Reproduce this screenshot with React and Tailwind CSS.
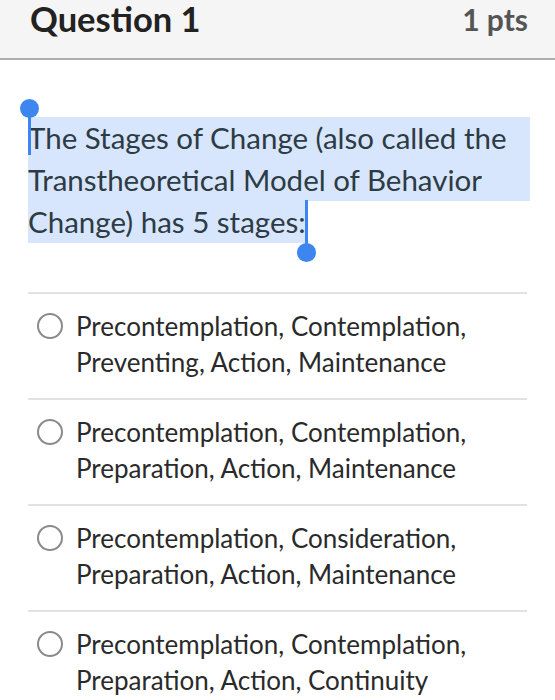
import React from "react";

const options = [
  ["Precontemplation, Contemplation,", "Preventing, Action, Maintenance"],
  ["Precontemplation, Contemplation,", "Preparation, Action, Maintenance"],
  ["Precontemplation, Consideration,", "Preparation, Action, Maintenance"],
  ["Precontemplation, Contemplation,", "Preparation, Action, Continuity"],
];

export default function App() {
  return (
    <div className="w-[555px] h-[700px] overflow-hidden bg-white" style={{ fontFamily: "Lato, 'Open Sans', sans-serif" }}>
      <div className="h-[60px] bg-[#f5f5f5] border-b-2 border-[#aeaeae] pl-[30px] pr-[27px] flex items-start justify-between">
        <div className="text-[34.5px] leading-[38px] font-bold text-[#222]">Question 1</div>
        <div className="text-[30px] leading-[38px] font-bold text-[#555]">1 pts</div>
      </div>
      <div className="px-[28px]">
        <div className="relative mt-[57px]">
          <div className="absolute left-0 top-0 w-[502px] h-[84px] bg-[#d7e6fc]"></div>
          <div className="absolute left-0 top-[84px] w-[279px] h-[42px] bg-[#d7e6fc]"></div>
          <p className="relative text-[29.5px] leading-[42px] text-[#2d3b45]">
            The Stages of Change (also called the Transtheoretical Model of Behavior Change) has 5 stages:
          </p>
          <div className="absolute left-0 top-0 w-[3px] h-[38px] bg-[#3d86f0]"></div>
          <div className="absolute left-[-8px] top-[-18px] w-[19px] h-[19px] rounded-full bg-[#3d86f0]"></div>
          <div className="absolute left-[277px] top-[83px] w-[3px] h-[50px] bg-[#3d86f0]"></div>
          <div className="absolute left-[269px] top-[126px] w-[19px] h-[19px] rounded-full bg-[#3d86f0]"></div>
        </div>
        <div className="mt-[49px]">
          {options.map((o, i) => (
            <div key={i} className="border-t-2 border-[#e2e2e2] pt-[14px] pb-[18px] flex items-start">
              <div className="ml-[9px] mt-[5px] w-[26px] h-[26px] rounded-full border-2 border-[#8a8a8a] bg-white shrink-0"></div>
              <div className="ml-[13px] text-[26px] leading-[36px] text-[#2a2a2a]">
                <div>{o[0]}</div>
                <div>{o[1]}</div>
              </div>
            </div>
          ))}
        </div>
      </div>
    </div>
  );
}
